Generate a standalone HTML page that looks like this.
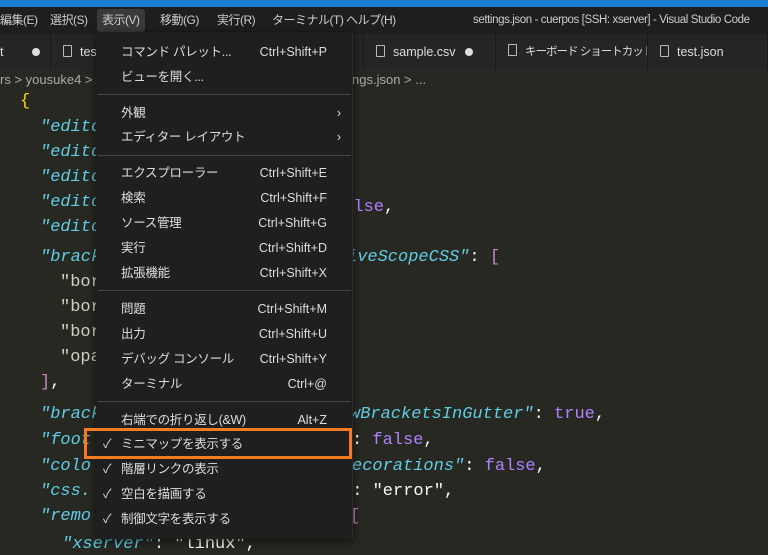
<!DOCTYPE html><html><head><meta charset="utf-8"><style>
*{margin:0;padding:0;box-sizing:border-box}
body{width:768px;height:552px;overflow:hidden;background:#272822;position:relative;font-family:"Liberation Sans","Noto Sans CJK JP",sans-serif;color:#ccc}
.top{position:absolute;left:0;top:0;width:768px;height:7px;background:#1a7fd4}
.mb{position:absolute;left:0;top:7px;width:768px;height:27px;background:#1e1e1e;font-size:12px;color:#ccc;white-space:nowrap}
.mb span{position:absolute;top:6px;line-height:15px;letter-spacing:-0.5px}
.tabs{position:absolute;left:0;top:34px;width:768px;height:36px;background:#252526;overflow:hidden}
.tab{position:absolute;top:0;height:36px;border-right:1px solid #1a1a1a;font-size:12.5px;color:#ddd;line-height:36px;white-space:nowrap;overflow:hidden}
.fi{display:inline-block;width:9px;height:12px;border:1px solid #bbb;border-radius:1px;vertical-align:-1px;margin-right:8px}
.dot{display:inline-block;width:8px;height:8px;border-radius:4px;background:#ddd}
.bc{position:absolute;top:70px;left:0;height:20px;font-size:13px;color:#aaa;line-height:20px;white-space:nowrap}
.c{position:absolute;font-family:"Liberation Mono","DejaVu Sans Mono",monospace;font-size:17px;white-space:pre;line-height:20px}
.k{color:#5fcde4;font-style:italic}.s{color:#cfcfc2}.p{color:#ae81ff}.w{color:#f8f8f2}.y{color:#ffd700}.m{color:#c586c0}
.menu{position:absolute;left:96px;top:32px;width:257px;height:507px;background:#1f1f1f;box-shadow:0 2px 8px rgba(0,0,0,.6);border-right:1px solid #2b2b2b}
.it{position:absolute;left:0;width:257px;font-size:12.5px;color:#ddd;height:16px;line-height:16px;white-space:nowrap}
.it .l{position:absolute;left:25px;top:0;letter-spacing:-0.3px}
.it .r{position:absolute;right:26px;top:0}
.it .ck{position:absolute;left:7px;top:0}
.sep{position:absolute;left:2px;width:253px;height:1px;background:#454545}
.hl{position:absolute;left:84px;top:428px;width:268px;height:31px;border:3px solid #f47b20}
</style></head><body>
<div class="top"></div>
<div class="mb">
<span style="left:0">編集(E)</span><span style="left:50px">選択(S)</span>
<span style="left:97px;top:2px;background:#3a3a3a;padding:4px 5px;border-radius:3px">表示(V)</span>
<span style="left:160px">移動(G)</span><span style="left:217px">実行(R)</span><span style="left:272px">ターミナル(T)</span><span style="left:346px">ヘルプ(H)</span>
<span style="left:473px;font-size:11.5px;letter-spacing:-0.4px">settings.json - cuerpos [SSH: xserver] - Visual Studio Code</span>
</div>
<div class="tabs">
<div class="tab" style="left:0;width:51px;padding-left:0">t<span class="dot" style="position:absolute;left:32px;top:14px"></span></div>
<div class="tab" style="left:51px;width:60px;padding-left:12px"><span class="fi"></span>tes</div>
<div class="tab" style="left:363px;width:133px;padding-left:12px;border-left:1px solid #1a1a1a"><span class="fi"></span>sample.csv <span class="dot" style="margin-left:6px"></span></div>
<div class="tab" style="left:496px;width:152px;padding-left:12px;font-size:11.5px;letter-spacing:-1px"><span class="fi"></span>キーボード ショートカット</div>
<div class="tab" style="left:648px;width:120px;padding-left:12px"><span class="fi"></span>test.json</div>
</div>
<div class="bc">rs &gt; yousuke4 &gt; A</div>
<div class="bc" style="left:352px">ngs.json &gt; ...</div>

<div class="c y" style="left:20px;top:92px">{</div>
<div class="c k" style="left:40px;top:118px">"editor</div>
<div class="c k" style="left:40px;top:143px">"editor</div>
<div class="c k" style="left:40px;top:168px">"editor</div>
<div class="c k" style="left:40px;top:193px">"editor</div>
<div class="c" style="left:333px;top:198px"><span class="p">false</span><span class="w">,</span></div>
<div class="c k" style="left:40px;top:218px">"editor</div>
<div class="c k" style="left:40px;top:248px">"brack</div>
<div class="c" style="left:347px;top:248px"><span class="k">iveScopeCSS"</span><span class="w">: </span><span class="m">[</span></div>
<div class="c s" style="left:60px;top:273px">"bor</div>
<div class="c s" style="left:60px;top:298px">"bor</div>
<div class="c s" style="left:60px;top:323px">"bor</div>
<div class="c s" style="left:60px;top:348px">"opa</div>
<div class="c" style="left:40px;top:373px"><span class="m">]</span><span class="w">,</span></div>
<div class="c k" style="left:40px;top:405px">"brack</div>
<div class="c" style="left:350px;top:405px"><span class="k">wBracketsInGutter"</span><span class="w">: </span><span class="p">true</span><span class="w">,</span></div>
<div class="c" style="left:40px;top:431px"><span class="k">"foot</span></div>
<div class="c" style="left:352px;top:431px"><span class="w">: </span><span class="p">false</span><span class="w">,</span></div>
<div class="c" style="left:40px;top:457px"><span class="k">"colo</span></div>
<div class="c" style="left:352px;top:457px"><span class="k">ecorations"</span><span class="w">: </span><span class="p">false</span><span class="w">,</span></div>
<div class="c" style="left:40px;top:482px"><span class="k">"css.</span></div>
<div class="c" style="left:342px;top:482px"><span class="k">"</span><span class="w">: "error",</span></div>
<div class="c" style="left:40px;top:507px"><span class="k">"remo</span></div>
<div class="c m" style="left:350px;top:507px">[</div>
<div class="c" style="left:62px;top:535px"><span class="k">"xserver"</span><span class="w">: "linux",</span></div>

<div class="menu">
<div class="it" style="top:12px"><span class="l">コマンド パレット...</span><span class="r">Ctrl+Shift+P</span></div>
<div class="it" style="top:37px"><span class="l">ビューを開く...</span></div>
<div class="sep" style="top:62px"></div>
<div class="it" style="top:73px"><span class="l">外観</span><span class="r" style="right:12px">›</span></div>
<div class="it" style="top:97px"><span class="l">エディター レイアウト</span><span class="r" style="right:12px">›</span></div>
<div class="sep" style="top:123px"></div>
<div class="it" style="top:133px"><span class="l">エクスプローラー</span><span class="r">Ctrl+Shift+E</span></div>
<div class="it" style="top:158px"><span class="l">検索</span><span class="r">Ctrl+Shift+F</span></div>
<div class="it" style="top:183px"><span class="l">ソース管理</span><span class="r">Ctrl+Shift+G</span></div>
<div class="it" style="top:208px"><span class="l">実行</span><span class="r">Ctrl+Shift+D</span></div>
<div class="it" style="top:233px"><span class="l">拡張機能</span><span class="r">Ctrl+Shift+X</span></div>
<div class="sep" style="top:258px"></div>
<div class="it" style="top:269px"><span class="l">問題</span><span class="r">Ctrl+Shift+M</span></div>
<div class="it" style="top:294px"><span class="l">出力</span><span class="r">Ctrl+Shift+U</span></div>
<div class="it" style="top:319px"><span class="l">デバッグ コンソール</span><span class="r">Ctrl+Shift+Y</span></div>
<div class="it" style="top:344px"><span class="l">ターミナル</span><span class="r">Ctrl+@</span></div>
<div class="sep" style="top:369px"></div>
<div class="it" style="top:380px"><span class="l">右端での折り返し(&amp;W)</span><span class="r">Alt+Z</span></div>
<div class="it" style="top:404px"><span class="ck">✓</span><span class="l">ミニマップを表示する</span></div>
<div class="it" style="top:429px"><span class="ck">✓</span><span class="l">階層リンクの表示</span></div>
<div class="it" style="top:454px"><span class="ck">✓</span><span class="l">空白を描画する</span></div>
<div class="it" style="top:479px"><span class="ck">✓</span><span class="l">制御文字を表示する</span></div>
</div>
<div class="hl"></div>
</body></html>
